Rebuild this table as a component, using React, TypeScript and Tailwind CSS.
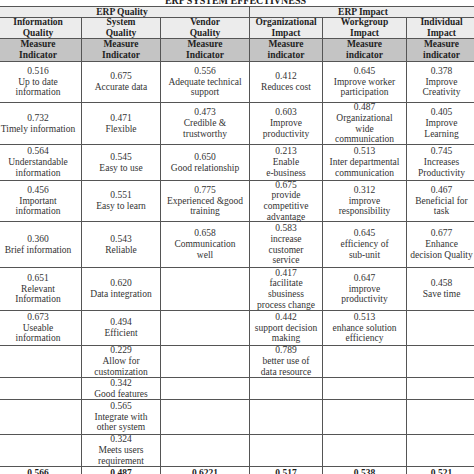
import React from "react";

const rows: string[][][] = [
  [["0.516", "Up to date", "information"], ["0.675", "Accurate data"], ["0.556", "Adequate technical", "support"], ["0.412", "Reduces cost"], ["0.645", "Improve worker", "participation"], ["0.378", "Improve", "Creativity"]],
  [["0.732", "Timely information"], ["0.471", "Flexible"], ["0.473", "Credible &", "trustworthy"], ["0.603", "Improve", "productivity"], ["0.487", "Organizational", "wide", "communication"], ["0.405", "Improve", "Learning"]],
  [["0.564", "Understandable", "information"], ["0.545", "Easy to use"], ["0.650", "Good relationship"], ["0.213", "Enable", "e-business"], ["0.513", "Inter departmental", "communication"], ["0.745", "Increases", "Productivity"]],
  [["0.456", "Important", "information"], ["0.551", "Easy to learn"], ["0.775", "Experienced &good", "training"], ["0.675", "provide", "competitive", "advantage"], ["0.312", "improve", "responsibility"], ["0.467", "Beneficial for", "task"]],
  [["0.360", "Brief information"], ["0.543", "Reliable"], ["0.658", "Communication", "well"], ["0.583", "increase", "customer", "service"], ["0.645", "efficiency of", "sub-unit"], ["0.677", "Enhance", "decision Quality"]],
  [["0.651", "Relevant", "Information"], ["0.620", "Data integration"], [], ["0.417", "facilitate", "sbusiness", "process change"], ["0.647", "improve", "productivity"], ["0.458", "Save time"]],
  [["0.673", "Useable", "information"], ["0.494", "Efficient"], [], ["0.442", "support decision", "making"], ["0.513", "enhance solution", "efficiency"], []],
  [[], ["0.229", "Allow for", "customization"], [], ["0.789", "better use of", "data resource"], [], []],
  [[], ["0.342", "Good features"], [], [], [], []],
  [[], ["0.565", "Integrate with", "other system"], [], [], [], []],
  [[], ["0.324", "Meets users", "requirement"], [], [], [], []],
];

const titles: [string, string][] = [
  ["Information", "Quality"],
  ["System", "Quality"],
  ["Vendor", "Quality"],
  ["Organizational", "Impact"],
  ["Workgroup", "Impact"],
  ["Individual", "Impact"],
];

const totals = ["0.566", "0.487", "0.6221", "0.517", "0.538", "0.521"];

function Cell({ lines, className = "" }: { lines: string[]; className?: string }) {
  return (
    <div className={`border-r border-b border-[#555] flex flex-col items-center justify-center text-center ${className}`}>
      {lines.map((l, i) => (
        <span key={i} className="whitespace-nowrap">
          {l}
        </span>
      ))}
    </div>
  );
}

export default function App() {
  return (
    <div className="w-[474px] h-[474px] overflow-hidden bg-white font-['Liberation_Serif',serif] text-[9.5px] leading-[10.7px] text-[#333]">
      <div className="-ml-[6px] w-[483px]">
        <div className="h-[6px] flex justify-center">
          <span className="-mt-[4px] leading-[10px] text-[10px] font-bold text-[#222] whitespace-nowrap">
            ERP SYSTEM EFFECTIVNESS
          </span>
        </div>
        <div className="grid grid-cols-[87px_79px_89px_73px_84px_70px] grid-rows-[11px_21px_23px_41px_42px_36px_41px_46px_43px_35px_32px_22px_35px_32px_20px] border-t border-l border-[#555]">
          <Cell lines={["ERP Quality"]} className="col-span-3 bg-[#ececec] font-bold text-[#1f1f1f]" />
          <Cell lines={["ERP Impact"]} className="col-span-3 bg-[#ececec] font-bold text-[#1f1f1f]" />
          {titles.map((t, i) => (
            <Cell key={`t${i}`} lines={t} className="bg-[#ececec] font-bold text-[#1f1f1f]" />
          ))}
          {titles.map((_, i) => (
            <Cell
              key={`m${i}`}
              lines={["Measure", i < 3 ? "Indicator" : "indicator"]}
              className="bg-[#c4c4c4] font-bold text-[#1f1f1f]"
            />
          ))}
          {rows.map((r, ri) =>
            r.map((c, ci) => <Cell key={`r${ri}c${ci}`} lines={c} />)
          )}
          {totals.map((t, i) => (
            <div key={`s${i}`} className="border-r border-[#555] flex justify-center pt-[1px] font-bold text-[#1f1f1f]">
              {t}
            </div>
          ))}
        </div>
      </div>
    </div>
  );
}
